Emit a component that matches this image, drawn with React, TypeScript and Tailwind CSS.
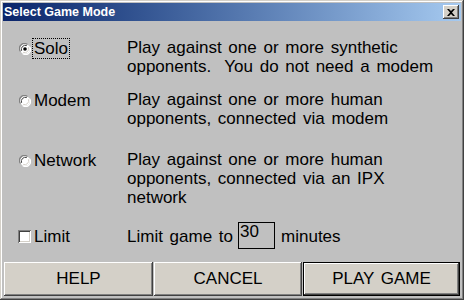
import React from "react";

const Radio = ({ checked }: { checked?: boolean }) => (
  <svg width="12" height="12" viewBox="0 0 12 12" className="shrink-0">
    <circle cx="6" cy="6" r="5" fill="#ffffff" />
    <path d="M1.5 8.5 A5 5 0 0 1 8.5 1.5" stroke="#808080" strokeWidth="1.2" fill="none" />
    <path d="M3.5 10.5 A5 5 0 0 0 10.5 3.5" stroke="#ffffff" strokeWidth="1.2" fill="none" />
    <path d="M2.6 7.8 A4 4 0 0 1 7.8 2.6" stroke="#404040" strokeWidth="1" fill="none" />
    <path d="M4.2 9.4 A4 4 0 0 0 9.4 4.2" stroke="#d4d0c8" strokeWidth="1" fill="none" />
    {checked && <circle cx="6" cy="6" r="1.8" fill="#000000" />}
  </svg>
);

const Checkbox = () => (
  <div className="w-[13px] h-[13px] shrink-0 bg-white shadow-[inset_1px_1px_#808080,inset_-1px_-1px_#ffffff,inset_2px_2px_#404040,inset_-2px_-2px_#d4d0c8]" />
);

const Option = ({
  label,
  checked,
  focused,
  lines,
  className,
}: {
  label: string;
  checked?: boolean;
  focused?: boolean;
  lines: string[];
  className: string;
}) => (
  <div className={`flex items-start ${className}`}>
    <div className="w-[124px] shrink-0 flex items-center gap-[1px] pl-[16px]">
      <Radio checked={checked} />
      <span
        className={`px-[1px] border leading-[19px] ${
          focused ? "border-dotted border-black" : "border-transparent"
        }`}
      >
        {label}
      </span>
    </div>
    <div className="leading-[19px] whitespace-pre">
      {lines.map((l) => (
        <div key={l}>{l}</div>
      ))}
    </div>
  </div>
);

const Button = ({ children, primary, w }: { children: React.ReactNode; primary?: boolean; w: string }) => (
  <div
    className={`${w} h-[34px] flex items-center justify-center bg-[#d4d0c8] ${
      primary
        ? "border border-black shadow-[inset_-1px_-1px_#404040,inset_1px_1px_#ffffff,inset_-2px_-2px_#808080]"
        : "shadow-[inset_-1px_-1px_#404040,inset_1px_1px_#ffffff,inset_-2px_-2px_#808080]"
    }`}
  >
    {children}
  </div>
);

export default function App() {
  return (
    <div
      className="w-[464px] h-[300px] bg-[#c0c0c0] flex flex-col p-[3px] pb-[4px] text-black text-[17px] [word-spacing:2px] shadow-[inset_-1px_-1px_#404040,inset_1px_1px_#d4d0c8,inset_-2px_-2px_#808080,inset_2px_2px_#ffffff]"
      style={{ fontFamily: '"Liberation Sans", Arial, sans-serif' }}
    >
      {/* title bar */}
      <div className="h-[18px] shrink-0 flex items-center justify-between pl-[1px] pr-[2px] bg-gradient-to-r from-[#0a246a] to-[#a6caf0]">
        <span className="text-white font-bold text-[12.5px] [word-spacing:0px] leading-none">Select Game Mode</span>
        <div className="w-[16px] h-[14px] bg-[#d4d0c8] flex items-center justify-center shadow-[inset_-1px_-1px_#404040,inset_1px_1px_#ffffff,inset_-2px_-2px_#808080]">
          <svg width="8" height="7" viewBox="0 0 8 7">
            <path d="M0 0h2l2 2 2-2h2L5 3.5 8 7H6L4 5 2 7H0l3-3.5z" fill="#000" />
          </svg>
        </div>
      </div>

      {/* body */}
      <div className="flex-1 flex flex-col">
        <Option
          className="mt-[17px]"
          label="Solo"
          checked
          focused
          lines={["Play against one or more synthetic", "opponents.  You do not need a modem"]}
        />
        <Option
          className="mt-[14px]"
          label="Modem"
          lines={["Play against one or more human", "opponents, connected via modem"]}
        />
        <Option
          className="mt-[22px]"
          label="Network"
          lines={["Play against one or more human", "opponents, connected via an IPX", "network"]}
        />

        <div className="flex items-start mt-[15px]">
          <div className="w-[124px] shrink-0 flex items-center gap-[3px] pl-[15px] mt-[5px]">
            <Checkbox />
            <span className="leading-[19px]">Limit</span>
          </div>
          <span className="leading-[19px] mt-[5px]">Limit game to</span>
          <div className="ml-[5px] w-[37px] h-[27px] border border-black pl-[1px] pt-[1px] leading-[15px]">30</div>
          <span className="leading-[19px] mt-[5px] ml-[6px]">minutes</span>
        </div>

        <div className="mt-auto flex gap-[1px] px-[1px]">
          <Button w="w-[149px]">HELP</Button>
          <Button w="w-[148px]">CANCEL</Button>
          <Button w="w-[157px]" primary>
            PLAY GAME
          </Button>
        </div>
      </div>
    </div>
  );
}
